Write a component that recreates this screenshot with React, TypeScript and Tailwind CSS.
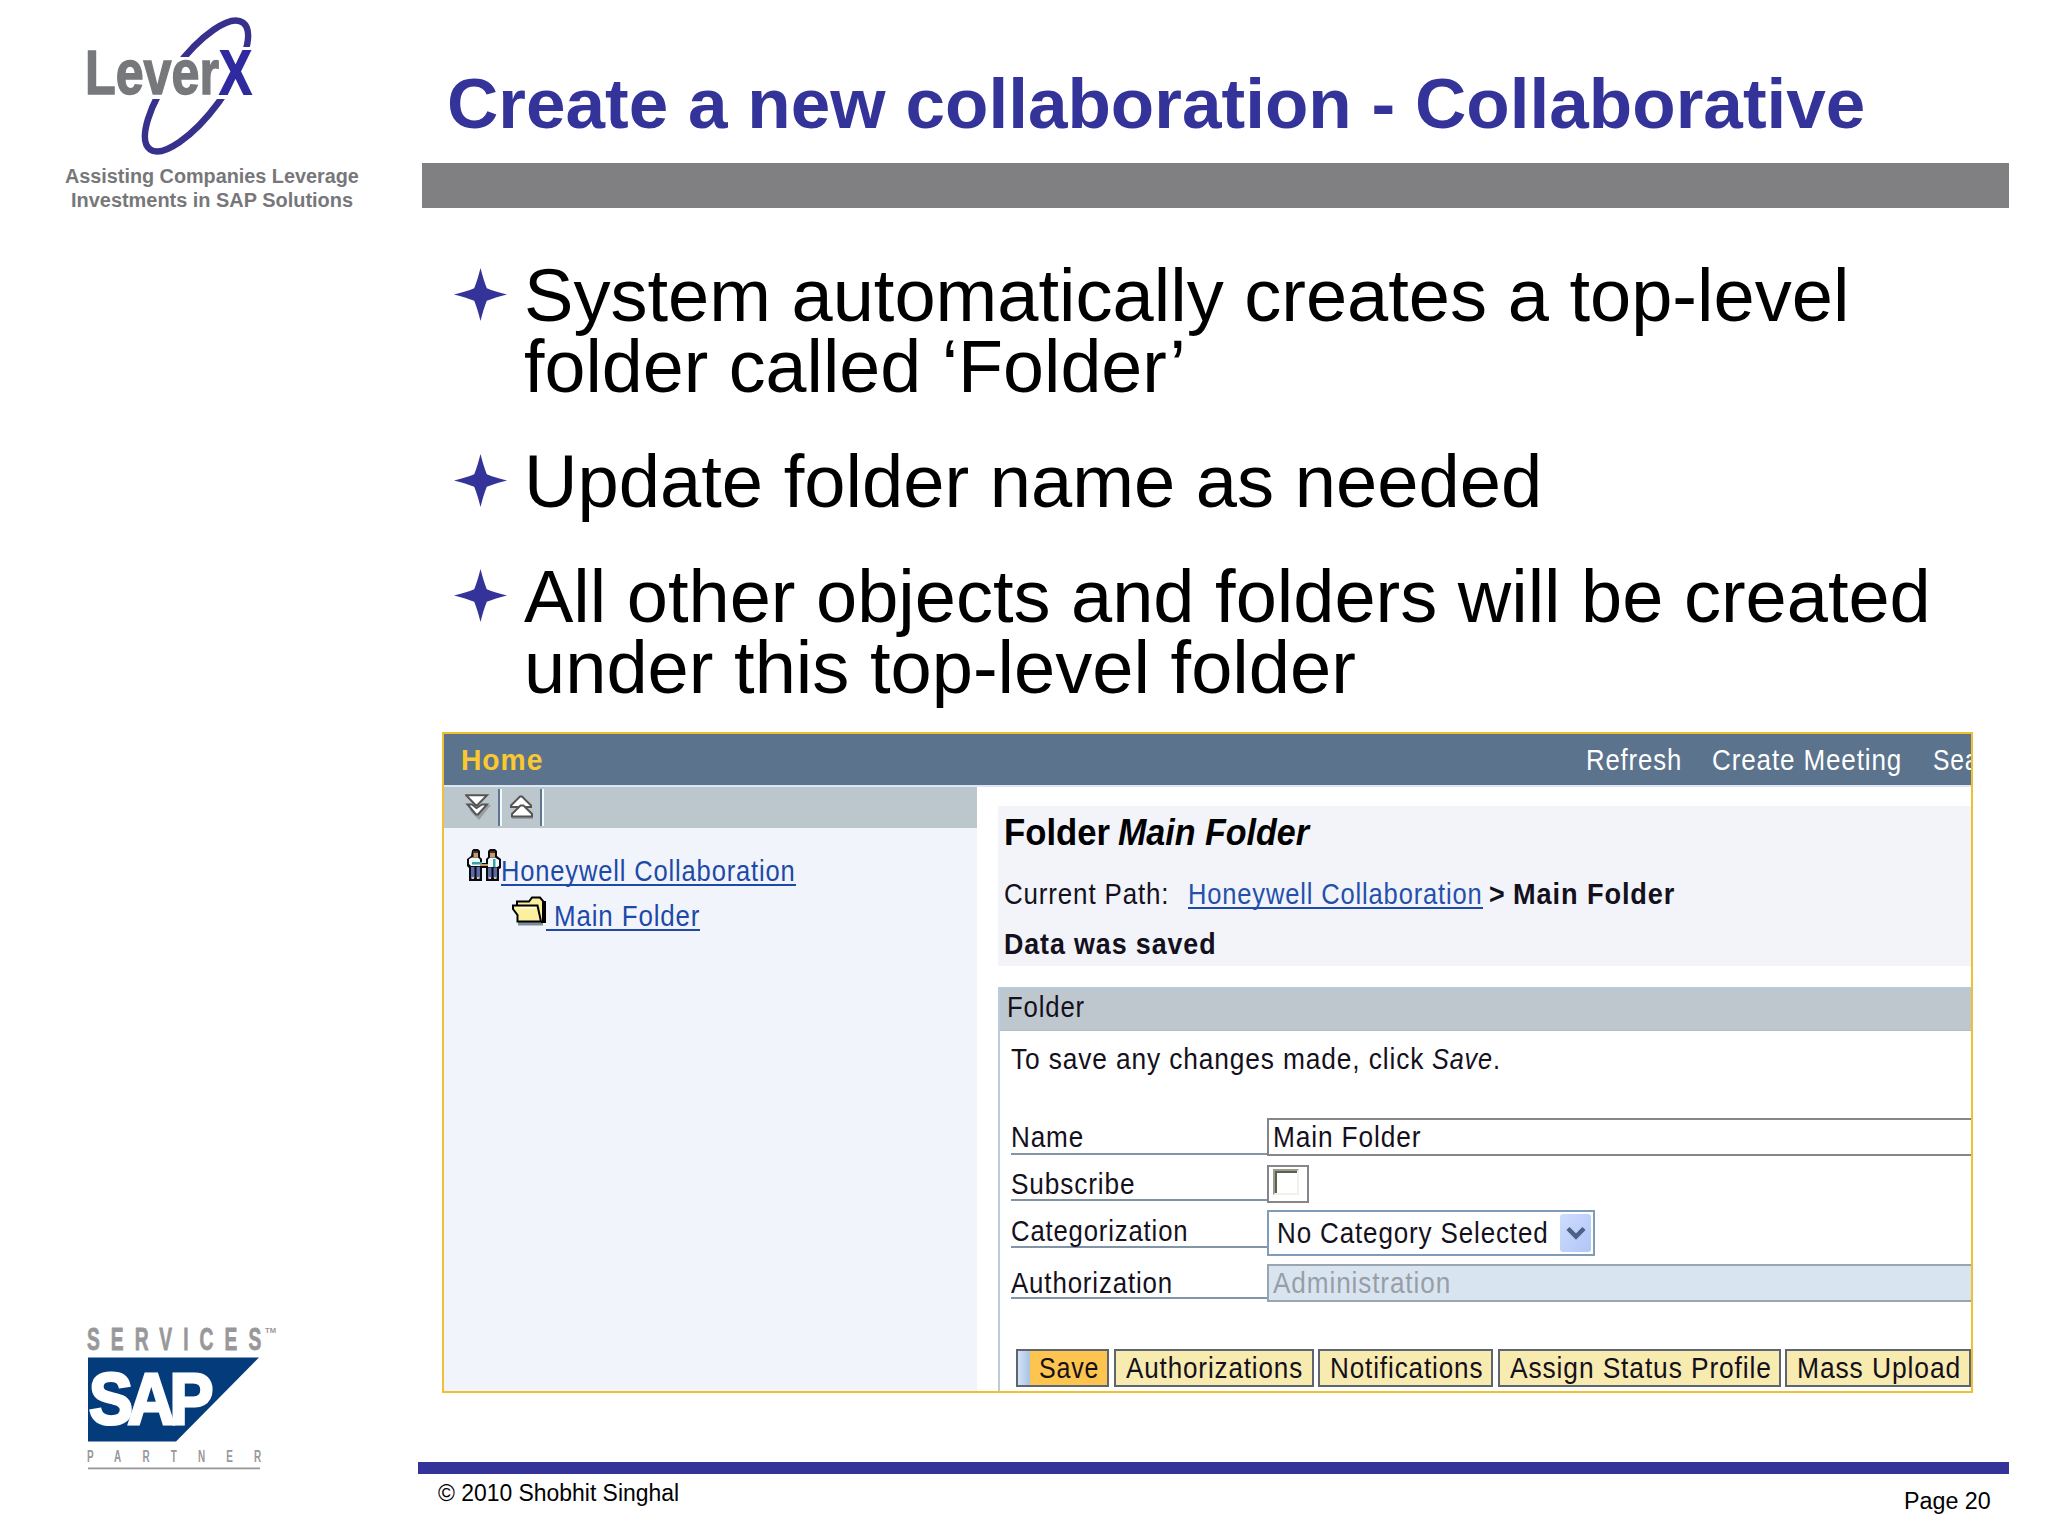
import React, { useLayoutEffect, useRef } from 'react';

interface FitTextProps {
  children: React.ReactNode;
  className?: string;
}

// Squeezes its text horizontally so that it fills the width given by className
const FitText: React.FC<FitTextProps> = ({ children, className = '' }) => {
  const outerRef = useRef<HTMLSpanElement>(null);
  const innerRef = useRef<HTMLSpanElement>(null);

  useLayoutEffect(() => {
    const outer = outerRef.current;
    const inner = innerRef.current;
    if (!outer || !inner) return;
    inner.style.transform = `scaleX(${outer.clientWidth / inner.offsetWidth})`;
  }, []);

  return (
    <span ref={outerRef} className={`block shrink-0 whitespace-nowrap ${className}`}>
      <span ref={innerRef} className="inline-block origin-left">
        {children}
      </span>
    </span>
  );
};

const LeverXLogo: React.FC = () => (
  <svg
    className="ml-[84px] mt-[14px] block"
    width="176"
    height="144"
    viewBox="84 14 176 144"
    fontFamily='"Liberation Sans", Arial, sans-serif'
    fontWeight="bold"
  >
    <ellipse
      cx="196.5"
      cy="86"
      rx="78.5"
      ry="27.5"
      transform="rotate(-53.7 196.5 86)"
      fill="none"
      stroke="#37308c"
      strokeWidth="6.5"
    />
    <rect x="86" y="57" width="125" height="42" fill="#fff" />
    <rect x="205" y="47" width="55" height="52" fill="#fff" />
    <text
      x="85"
      y="94"
      fontSize="63"
      fill="#77787b"
      stroke="#77787b"
      strokeWidth="1.5"
      textLength="134"
      lengthAdjust="spacingAndGlyphs"
    >
      Lever
    </text>
    <text
      x="219.5"
      y="94"
      fontSize="63"
      fill="#2f2aa0"
      stroke="#2f2aa0"
      strokeWidth="2"
      textLength="32"
      lengthAdjust="spacingAndGlyphs"
    >
      X
    </text>
  </svg>
);

const SapLogo: React.FC = () => (
  <svg
    className="ml-[84px] block"
    width="200"
    height="152"
    viewBox="84 1322 200 152"
    fontFamily='"Liberation Sans", Arial, sans-serif'
    fontWeight="bold"
  >
    <g transform="translate(87 1349.5) scale(0.62 1)">
      <text fontSize="31" fill="#98989a" stroke="#98989a" strokeWidth="0.8" textLength="281" lengthAdjust="spacing">
        SERVICES
      </text>
    </g>
    <text x="265" y="1333" fontSize="8" fill="#98989a" textLength="11" lengthAdjust="spacingAndGlyphs">
      TM
    </text>
    <path d="M88 1357.5H259L176 1441.5H88Z" fill="#043b7a" />
    <text
      x="89"
      y="1424"
      fontSize="72"
      fill="#fff"
      stroke="#fff"
      strokeWidth="3"
      letterSpacing="-6"
      textLength="119"
      lengthAdjust="spacingAndGlyphs"
    >
      SAP
    </text>
    <g transform="translate(87 1461.5) scale(0.62 1)">
      <text fontSize="16" fill="#98989a" textLength="281" lengthAdjust="spacing">
        PARTNER
      </text>
    </g>
    <rect x="88" y="1467.5" width="172" height="1.8" fill="#98989a" />
  </svg>
);

const Star: React.FC = () => (
  <svg className="mt-2 block shrink-0" width="53" height="53" viewBox="0 0 53 53">
    <path
      d="M26.5 0Q29.500 12 32.800 20.200Q41 23.500 53 26.500Q41 29.500 32.800 32.800Q29.500 41 26.500 53Q23.500 41 20.200 32.800Q12 29.500 0 26.500Q12 23.500 20.200 20.200Q23.500 12 26.500 0Z"
      fill="#333399"
    />
  </svg>
);

const ExpandIcon: React.FC = () => (
  <svg className="mt-[7px] block shrink-0" width="26" height="26" viewBox="0 0 26 26">
    <path d="M5 12L26 11L14 26L5 17Z" fill="#98a0a6" />
    <path d="M1 1.2H22L12.5 11H10.5Z" fill="#fff" stroke="#555" strokeWidth="2" />
    <path d="M2.5 10.5H7L11.5 14L17 10.5H22L13 20.5H11Z" fill="#fff" stroke="#555" strokeWidth="2" />
  </svg>
);

const CollapseIcon: React.FC = () => (
  <svg className="mt-2 block shrink-0" width="25" height="25" viewBox="0 0 25 25">
    <path d="M3 21H24V24H3Z" fill="#98a0a6" />
    <path d="M11 1.5H13L22 10.5V12H2V10.5Z" fill="#fff" stroke="#555" strokeWidth="2" />
    <path d="M11.5 10.5H14.5L23 19V21.5H3V19Z" fill="#fff" stroke="#555" strokeWidth="2" />
  </svg>
);

const PeopleIcon: React.FC = () => (
  <svg className="block shrink-0" width="34" height="32" viewBox="0 0 34 32">
    <path
      d="M5 1.5L6.5 0H11L13 2V8L15 10V14H19V10L21 8V2L23 0H28L30 2V7L34 10V19L32 20V32H19V19H15V32H2V19L0 17V10L4 7Z"
      fill="#0a0a12"
    />
    <path d="M6.5 3H11V8H6.5ZM23 3H28V8H23Z" fill="#c99a6a" />
    <path d="M6 2H11V4H6ZM23 2H28V4H23Z" fill="#4d2f1c" />
    <path d="M2 10L5 8.5H11L13 10.5V17H4L2 15ZM21 10.5L23 8.5H28L32 11V17L30 18H21Z" fill="#f2fbfc" />
    <path d="M5 13H15V15.5H5ZM26 10H28.5V18H26Z" fill="#3aa3a6" />
    <path d="M13 15H21V17H13Z" fill="#c99a6a" />
    <path d="M4 18H7.500V29H4ZM9.500 18H13V29H9.500ZM21 18.500H24.500V29H21ZM26.500 18.500H30V29H26.500Z" fill="#5d6ba6" />
    <path d="M4.500 28H7V30H4.500ZM10 28H12.500V30H10ZM21.500 28H24V30H21.500ZM27 28H29.500V30H27Z" fill="#d7c3b4" />
  </svg>
);

const FolderIcon: React.FC = () => (
  <svg className="block shrink-0" width="34" height="30" viewBox="0 0 34 30">
    <path d="M6 26H31V29.5H6Z" fill="#7d8b98" />
    <path d="M5 9V5.5H17L20 1.5H28L31 5V26H29" fill="#fbef9c" stroke="#000" strokeWidth="2" />
    <path d="M31 5H34V27H30V14Z" fill="#000" />
    <path d="M1 9.5H25.5L29 25.5H5.5V19L1 13Z" fill="#fbf0a0" stroke="#000" strokeWidth="2" />
    <path d="M4 11H24V12.5H4Z" fill="#fffde0" />
  </svg>
);

const bullets = [
  [
    { text: 'System automatically creates a top-level', width: 'w-[1325px]' },
    { text: 'folder called ‘Folder’', width: 'w-[662px]' },
  ],
  [{ text: 'Update folder name as needed', width: 'w-[1018px]' }],
  [
    { text: 'All other objects and folders will be created', width: 'w-[1407px]' },
    { text: 'under this top-level folder', width: 'w-[832px]' },
  ],
];

const buttons = [
  { label: 'Authorizations', box: 'ml-[5px] w-[200px] pl-[10px]', text: 'w-[177px]' },
  { label: 'Notifications', box: 'ml-1 w-[175px] pl-[10px]', text: 'w-[153px]' },
  { label: 'Assign Status Profile', box: 'ml-[5px] w-[283px] pl-[10px]', text: 'w-[262px]' },
  { label: 'Mass Upload', box: 'ml-1 w-[186px] pl-[10px]', text: 'w-[164px]' },
];

const TreePane: React.FC = () => (
  <div className="w-[533px] shrink-0 bg-[#f2f4fb]">
    <div className="flex h-[41px] items-start bg-[#bcc6cd] pl-[21px]">
      <ExpandIcon />
      <div className="ml-[7px] mt-[2px] h-[37px] w-1 border-l-2 border-r-2 border-l-[#5b7693] border-r-[#f4f8fb]" />
      <div className="w-[7px]" />
      <CollapseIcon />
      <div className="ml-[6px] mt-[2px] h-[37px] w-1 border-l-2 border-r-2 border-l-[#5b7693] border-r-[#f4f8fb]" />
    </div>
    <div className="flex h-[60px] items-start pl-[23px] pt-[21px] text-[#1d4aa8]">
      <PeopleIcon />
      <FitText className="mt-1 h-[33px] w-[295px] border-b-2 border-[#1d4aa8]">Honeywell Collaboration</FitText>
    </div>
    <div className="flex items-start pl-[68px] pt-2 text-[#1d4aa8]">
      <FolderIcon />
      <div className="mt-[2px] h-[33px] w-[154px] border-b-2 border-[#1d4aa8] pl-[8px]">
        <FitText className="w-[146px]">Main Folder</FitText>
      </div>
    </div>
  </div>
);

const FolderForm: React.FC = () => (
  <div className="mt-[21px] h-[420px] border-l-2 border-[#b8cde0]">
    <div className="h-[44px] border-b border-t-2 border-b-[#aebfca] border-t-[#b0cde0] bg-[#bfc7ce] pl-[7px]">
      <FitText className="w-[78px]">Folder</FitText>
    </div>
    <div className="pl-[11px] pt-[10px]">
      <div className="flex h-[36px]">
        <FitText className="w-[413px]">To save any changes made, click</FitText>
        <FitText className="ml-[8px] w-[69px]">
          <i>Save</i>.
        </FitText>
      </div>

      <div className="mt-[41px] flex h-[38px]">
        <div className="h-[37px] w-[256px] shrink-0 border-b-2 border-[#8294a6] pt-[1px]">
          <FitText className="w-[73px]">Name</FitText>
        </div>
        <div className="w-[720px] shrink-0 border-2 border-[#85858a] bg-white pl-[4px] leading-[34px]">
          <FitText className="w-[148px]">Main Folder</FitText>
        </div>
      </div>

      <div className="mt-[9px] flex h-[38px]">
        <div className="h-[36px] w-[256px] border-b-2 border-[#8294a6] pt-[1px]">
          <FitText className="w-[124px]">Subscribe</FitText>
        </div>
        <div className="w-[42px] border-2 border-[#85858a] bg-white pl-1 pt-[2px]">
          <div className="h-[26px] w-[26px] border-2 border-b-[#f3f1ea] border-l-[#9c9c8c] border-r-[#f3f1ea] border-t-[#9c9c8c]">
            <div className="h-full w-full border-l-2 border-t-2 border-[#5f5f50]" />
          </div>
        </div>
      </div>

      <div className="mt-[7px] flex h-[46px]">
        <div className="h-[38px] w-[256px] border-b-2 border-[#8294a6] pt-[3px]">
          <FitText className="w-[177px]">Categorization</FitText>
        </div>
        <div className="flex w-[328px] border-2 border-[#7f9db9] bg-white pl-[8px] pt-[2px]">
          <FitText className="mt-[1px] w-[272px]">No Category Selected</FitText>
          <div className="ml-[11px] flex h-[38px] w-[31px] items-center justify-center rounded-[3px] bg-linear-to-br from-[#cfdcfd] to-[#b0c6f8]">
            <svg width="20" height="14" viewBox="0 0 20 14">
              <path d="M2 2.5L10 10.5L18 2.5" fill="none" stroke="#4d6185" strokeWidth="4.5" />
            </svg>
          </div>
        </div>
      </div>

      <div className="mt-2 flex h-[38px]">
        <div className="h-[35px] w-[256px] shrink-0 border-b-2 border-[#8294a6] pt-[1px]">
          <FitText className="w-[162px]">Authorization</FitText>
        </div>
        <div className="w-[720px] shrink-0 border-2 border-[#9aa5b0] bg-[#d9e4f1] pl-[4px] leading-[34px] text-[#989ea6]">
          <FitText className="w-[178px]">Administration</FitText>
        </div>
      </div>

      <div className="mt-[47px] flex h-[38px] pl-[5px] leading-[34px]">
        <div className="flex w-[93px] shrink-0 border-2 border-[#5d6670] bg-[#fdc44f]">
          <div className="w-[12px] bg-linear-to-r from-[#d3e2f6] to-[#a9c2e4]" />
          <FitText className="ml-[9px] w-[60px]">Save</FitText>
        </div>
        {buttons.map((b) => (
          <div key={b.label} className={`shrink-0 border-2 border-[#5d6670] bg-[#f8ebb0] ${b.box}`}>
            <FitText className={b.text}>{b.label}</FitText>
          </div>
        ))}
      </div>
    </div>
  </div>
);

const PortalWindow: React.FC = () => (
  <div className="ml-[24px] mt-[29px] flex h-[661px] w-[1531px] flex-col overflow-hidden border-2 border-[#efc033] bg-white text-[30px] leading-[36px] tracking-[1px] text-[#14101c]">
    <div className="flex h-[51px] shrink-0 bg-[#5b738d] pl-[17px] pt-2 text-white">
      <FitText className="w-[82px] font-bold text-[#fac92f]">Home</FitText>
      <FitText className="ml-[1043px] w-[96px]">Refresh</FitText>
      <FitText className="ml-[30px] w-[190px]">Create Meeting</FitText>
      <FitText className="ml-[31px] w-[83px]">Search</FitText>
    </div>
    <div className="h-[2px] shrink-0 bg-[#dbe8f3]" />
    <div className="flex min-h-0 flex-1">
      <TreePane />
      <div className="min-w-0 flex-1 overflow-hidden pl-[21px] pt-[19px]">
        <div className="h-[160px] bg-[#f2f4fa] pl-[6px] pt-[7px]">
          <div className="flex text-[36px] font-bold leading-[40px] tracking-normal text-black">
            <FitText className="w-[106px]">Folder</FitText>
            <FitText className="ml-[8px] w-[191px] italic">Main Folder</FitText>
          </div>
          <div className="mt-[23px] flex h-[36px]">
            <FitText className="w-[165px]">Current Path:</FitText>
            <FitText className="ml-[19px] h-[33px] w-[295px] border-b-2 border-[#1d4aa8] text-[#2450ac]">
              Honeywell Collaboration
            </FitText>
            <FitText className="ml-[6px] w-[17px] font-bold">&gt;</FitText>
            <FitText className="ml-[7px] w-[162px] font-bold">Main Folder</FitText>
          </div>
          <FitText className="mt-[14px] w-[212px] font-bold">Data was saved</FitText>
        </div>
        <FolderForm />
      </div>
    </div>
  </div>
);

const App: React.FC = () => {
  return (
    <div className="flex h-[1536px] w-[2048px] overflow-hidden bg-white font-['Liberation_Sans',Arial,sans-serif] text-black">
      <aside className="flex w-[418px] shrink-0 flex-col">
        <LeverXLogo />
        <div className="mt-[6px] text-[20px] font-bold leading-[24px] text-[#77777a]">
          <FitText className="ml-[65px] w-[294px]">Assisting Companies Leverage</FitText>
          <FitText className="ml-[71px] w-[282px]">Investments in SAP Solutions</FitText>
        </div>
        <div className="mt-[1110px]">
          <SapLogo />
        </div>
      </aside>

      <main className="flex w-[1591px] shrink-0 flex-col">
        <h1 className="ml-[29px] mt-[64px] h-[99px] text-[71px] font-bold leading-[80px] text-[#333399]">
          <FitText className="w-[1418px]">Create a new collaboration - Collaborative</FitText>
        </h1>
        <div className="ml-[4px] h-[45px] shrink-0 bg-[#808083]" />

        <ul className="ml-[36px] mt-[52px] flex flex-col gap-[44px] text-[74px] leading-[71px]">
          {bullets.map((lines) => (
            <li key={lines[0].text} className="flex">
              <Star />
              <div className="ml-[17px]">
                {lines.map((line) => (
                  <FitText key={line.text} className={line.width}>
                    {line.text}
                  </FitText>
                ))}
              </div>
            </li>
          ))}
        </ul>

        <PortalWindow />

        <div className="mt-[69px] h-[12px] shrink-0 bg-[#333399]" />
        <div className="flex justify-between pl-[20px] pr-[18px] text-[23px] leading-[26px]">
          <FitText className="mt-[6px] w-[241px]">© 2010 Shobhit Singhal</FitText>
          <FitText className="mt-[14px] w-[87px]">Page 20</FitText>
        </div>
      </main>
    </div>
  );
};

export default App;
